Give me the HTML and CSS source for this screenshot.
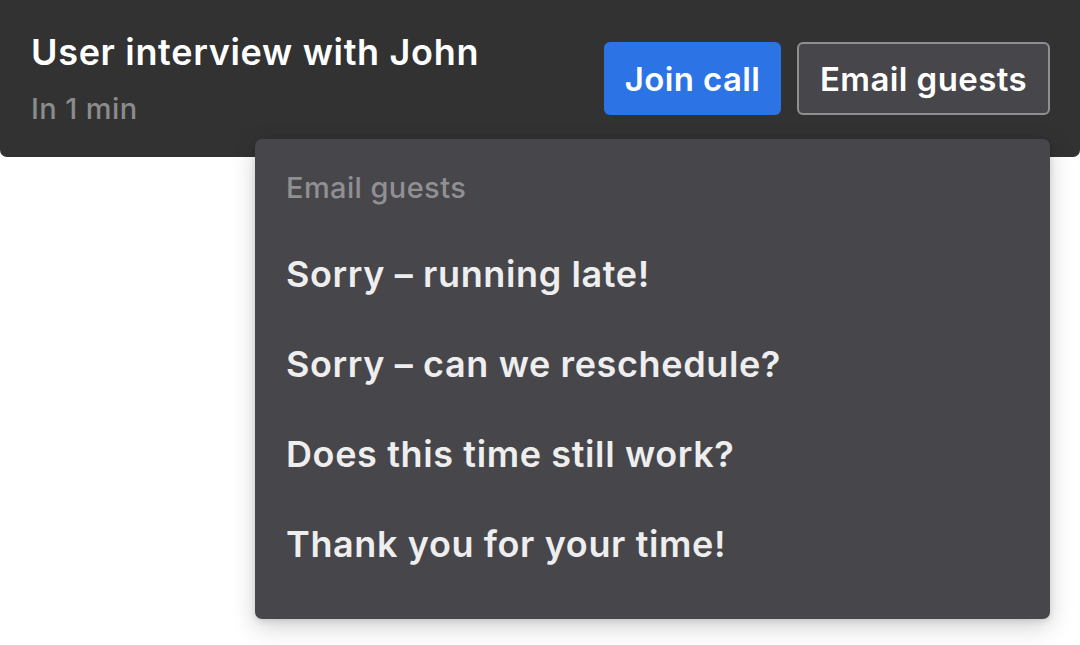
FILE: index.html
```html
<!DOCTYPE html>
<html>
<head>
<meta charset="utf-8">
<link rel="stylesheet" href="styles.css">
</head>
<body>
<div class="page">
  <header class="bar">
    <div class="info">
      <div class="title">User interview with John</div>
      <div class="sub">In 1 min</div>
    </div>
    <div class="actions">
      <button class="btn primary">Join call</button>
      <button class="btn outline">Email guests</button>
    </div>
  </header>
  <div class="menu">
    <div class="menu-head">Email guests</div>
    <div class="menu-item">Sorry – running late!</div>
    <div class="menu-item">Sorry – can we reschedule?</div>
    <div class="menu-item">Does this time still work?</div>
    <div class="menu-item">Thank you for your time!</div>
  </div>
</div>
</body>
</html>
```
FILE: styles.css
```css
* { box-sizing: border-box; }
html, body { margin: 0; padding: 0; background: #ffffff; }
body { font-family: Inter, "Noto Sans", sans-serif; width: 1080px; height: 645px; overflow: hidden; }
.page { position: relative; width: 1080px; height: 645px; }
.bar {
  height: 157px;
  background: #323233;
  border-radius: 0 0 7px 7px;
  display: flex;
  justify-content: space-between;
  align-items: flex-start;
  padding: 0 30px 0 31px;
}
.info { padding-top: 31px; }
.title { color: #ffffff; font-size: 36px; font-weight: 600; line-height: 42px; letter-spacing: 0.68px; }
.sub { color: #8b8b8b; font-size: 29px; font-weight: 500; line-height: 34px; margin-top: 19px; letter-spacing: 0.4px; }
.actions { display: flex; gap: 16px; padding-top: 42px; }
.btn {
  height: 73px;
  border-radius: 6px;
  font-family: Inter, "Noto Sans", sans-serif;
  font-size: 33px;
  font-weight: 600;
  letter-spacing: 0.4px;
  color: #ffffff;
  cursor: pointer;
  padding: 0;
}
.primary { width: 177px; background: #2c74e5; border: none; }
.outline { width: 253px; background: #47464b; border: 2px solid #8f8f91; }
.menu {
  position: absolute;
  left: 255px;
  top: 139px;
  width: 795px;
  height: 480px;
  background: #47464b;
  border-radius: 7px;
  box-shadow: 0 8px 24px rgba(0,0,0,0.18), 0 2px 6px rgba(0,0,0,0.12);
  padding: 31px 31px 0 31px;
}
.menu-head { color: #909093; font-size: 29px; font-weight: 500; line-height: 36px; margin-bottom: 48px; letter-spacing: 0.4px; }
.menu-item { color: #eeeeee; font-size: 36px; font-weight: 600; height: 90px; line-height: 40px; letter-spacing: 0.62px; }
```
